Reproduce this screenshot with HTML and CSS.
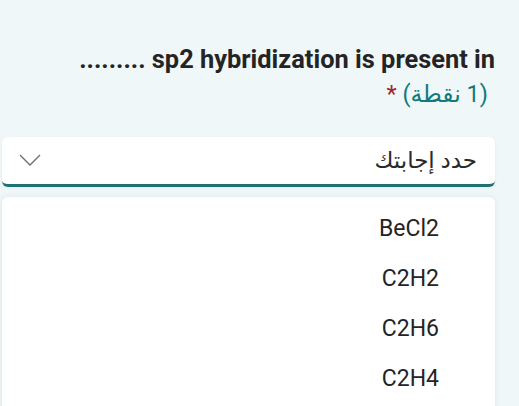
FILE: index.html
```html
<!DOCTYPE html>
<html lang="ar" dir="rtl">
<head>
<meta charset="utf-8">
<link rel="stylesheet" href="styles.css">
</head>
<body>
<main class="page">
  <h1 class="title">sp2 hybridization is present in .........</h1>
  <div class="points">(1 نقطة) <span class="req">*</span></div>
  <div class="select">
    <span class="placeholder">حدد إجابتك</span>
    <svg class="chev" width="22" height="12" viewBox="0 0 22 12"><path d="M1 1 L11 11 L21 1" fill="none" stroke="#6b6b6b" stroke-width="1.3"/></svg>
  </div>
  <ul class="dropdown">
    <li class="option">BeCl2</li>
    <li class="option">C2H2</li>
    <li class="option">C2H6</li>
    <li class="option">C2H4</li>
  </ul>
</main>
</body>
</html>
```
FILE: styles.css
```css
html, body {
  margin: 0;
  padding: 0;
  background: #f0f7f8;
  height: 100%;
  overflow: hidden;
}
.page {
  padding: 44px 24px 0 2px;
  font-family: Roboto, "DejaVu Sans", sans-serif;
  color: #242424;
}
.title {
  margin: 0;
  font-size: 25.4px;
  line-height: 30px;
  font-weight: 700;
  text-align: right;
}
.points {
  margin-top: 5px;
  padding-right: 7px;
  font-size: 23.5px;
  line-height: 30px;
  color: #0f7a7c;
}
.req {
  color: #a4262c;
}
.select {
  margin-top: 28px;
  height: 47px;
  background: #fff;
  border-radius: 6px;
  border-bottom: 3px solid #1f7070;
  display: flex;
  align-items: center;
  justify-content: space-between;
  padding: 0 18px 0 17px;
  box-shadow: 0 1px 3px rgba(0,0,0,0.06);
}
.placeholder {
  font-size: 23px;
  color: #2a2a2a;
}
.chev {
  display: block;
  margin-top: -2px;
}
.dropdown {
  list-style: none;
  margin: 10px 0 0 0;
  padding: 6px 0 0 0;
  background: #fff;
  border-radius: 6px;
  box-shadow: 0 0 6px rgba(0,0,0,0.08);
  height: 260px;
}
.option {
  height: 50px;
  display: flex;
  align-items: center;
  padding-right: 56px;
  font-size: 23px;
  color: #242424;
}
```
